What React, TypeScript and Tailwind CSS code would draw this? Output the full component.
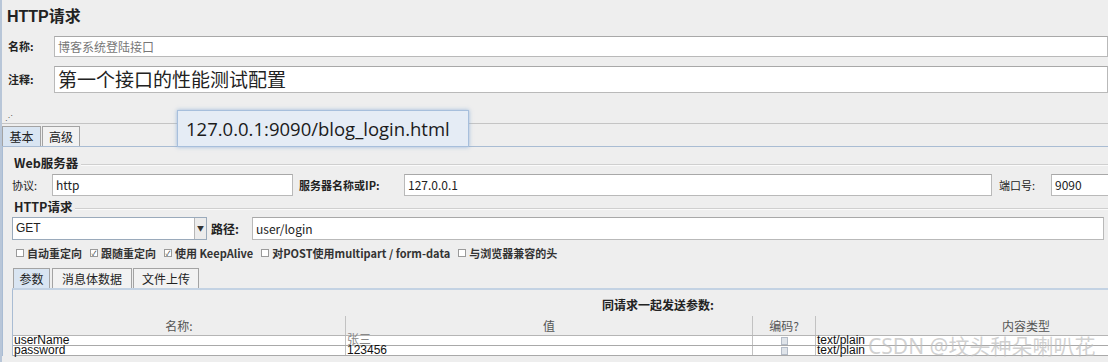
const cjk = { fontFamily: '"Noto Sans CJK SC", "Liberation Sans", sans-serif' };

function TextField({ value, className = '', big = false }: { value: string; className?: string; big?: boolean }) {
  return (
    <div
      className={`flex shrink-0 items-center border border-[#b9b9b9] border-t-[#a8a8a8] bg-white px-[3px] ${
        big ? 'text-[19px] text-[#222]' : 'text-[12px] text-[#222]'
      } ${className}`}
    >
      <span className="whitespace-nowrap">{value}</span>
    </div>
  );
}

function Check({ checked, label }: { checked: boolean; label: string }) {
  return (
    <div className="flex items-center gap-[3px] whitespace-nowrap">
      <span className="flex h-[8px] w-[8px] items-center justify-center border border-[#9a9a9a] bg-white text-[7px] leading-none text-[#333]">
        {checked ? '✓' : ''}
      </span>
      <span className="text-[11px] font-bold text-[#333]">{label}</span>
    </div>
  );
}

function GroupTitle({ title }: { title: string }) {
  return (
    <div className="flex h-[14px] items-center gap-[3px] pl-[2px]">
      <span className="whitespace-nowrap text-[12.5px] font-bold text-[#222]">{title}</span>
      <div className="mt-[3px] h-[2px] flex-1 border-t border-b border-t-[#cfcfcf] border-b-[#fafafa]" />
    </div>
  );
}

const params = [
  { name: 'userName', value: '张三', type: 'text/plain' },
  { name: 'password', value: '123456', type: 'text/plain' },
];

export default function App() {
  return (
    <div
      className="relative h-[362px] w-[1108px] overflow-hidden border-l-2 border-l-[#b8c6d8] bg-[#eeeeee] text-[#222]"
      style={cjk}
    >
      {/* header */}
      <div className="flex h-[34px] items-center pl-[5px] text-[16px] font-bold" style={{ fontFamily: '"Liberation Sans", "Noto Sans CJK SC", sans-serif' }}>
        HTTP请求
      </div>
      <div className="mt-[2px] flex h-[21px] items-center">
        <span className="w-[52px] shrink-0 pl-[6px] text-[11px] font-bold">名称:</span>
        <TextField value="博客系统登陆接口" className="h-[21px] flex-1 text-[#777]" />
      </div>
      <div className="mt-[9px] flex h-[27px] items-center">
        <span className="w-[52px] shrink-0 pl-[6px] text-[11px] font-bold">注释:</span>
        <TextField value="第一个接口的性能测试配置" big className="h-[27px] flex-1" />
      </div>
      <div className="flex h-[30px] items-end pb-[2px] pl-[3px] text-[8px] leading-none text-[#555]">⋰</div>
      <div className="h-px bg-[#c4c4c4]" />

      {/* top tabs */}
      <div className="flex h-[22px] items-end">
        <div className="flex h-[20px] w-[39px] items-center justify-center border border-b-0 border-[#a3a3a3] bg-[#d9e5f2] text-[12px]">基本</div>
        <div className="ml-px flex h-[20px] w-[38px] items-center justify-center border border-b-0 border-[#a3a3a3] bg-[#f2f2f2] text-[12px]">高级</div>
      </div>

      <div className="border-t border-l border-[#a9bcd3] pl-[9px] pt-[9px]">
        <GroupTitle title="Web服务器" />
        <div className="mt-[4px] flex h-[22px] items-center">
          <span className="w-[40px] shrink-0 text-[11px]">协议:</span>
          <TextField value="http" className="h-[22px] w-[241px]" />
          <span className="ml-[6px] w-[105px] shrink-0 text-[11px] font-bold">服务器名称或IP:</span>
          <TextField value="127.0.0.1" className="h-[22px] w-[588px]" />
          <span className="ml-[7px] w-[52px] shrink-0 text-[11px]">端口号:</span>
          <TextField value="9090" className="h-[22px] w-[90px]" />
        </div>

        <div className="mt-[4px]">
          <GroupTitle title="HTTP请求" />
        </div>
        <div className="mt-[3px] flex h-[23px] items-center">
          <div className="flex h-[23px] w-[195px] border border-[#9aaabb] bg-white">
            <span className="flex-1 pl-[3px] text-[12px] leading-[21px]" style={{ fontFamily: '"Liberation Sans", sans-serif' }}>GET</span>
            <span className="flex w-[12px] items-center justify-center border-l border-[#b7b7b7] bg-[#ececec] text-[7px] text-[#333]">▼</span>
          </div>
          <span className="ml-[4px] w-[41px] text-[12px] font-bold">路径:</span>
          <TextField value="user/login" className="h-[23px] w-[852px]" />
        </div>

        <div className="mt-[6px] flex h-[14px] items-center gap-[8px] pl-[4px]">
          <Check checked={false} label="自动重定向" />
          <Check checked label="跟随重定向" />
          <Check checked label="使用 KeepAlive" />
          <Check checked={false} label="对POST使用multipart / form-data" />
          <Check checked={false} label="与浏览器兼容的头" />
        </div>

        {/* sub tabs */}
        <div className="mt-[7px] flex h-[21px] items-end pl-[1px]">
          <div className="flex h-[20px] w-[37px] items-center justify-center border border-b-0 border-[#a3a3a3] bg-[#d9e5f2] text-[12px]">参数</div>
          <div className="ml-[2px] flex h-[20px] w-[80px] items-center justify-center border border-b-0 border-[#a3a3a3] bg-[#f2f2f2] text-[12px]">消息体数据</div>
          <div className="ml-px flex h-[20px] w-[66px] items-center justify-center border border-b-0 border-[#a3a3a3] bg-[#f2f2f2] text-[12px]">文件上传</div>
        </div>

        <div className="border-t-2 border-l border-t-[#c3d2e3] border-l-[#a9bcd3]">
          <div className="flex h-[24px] items-end pl-[589px] text-[12px] font-bold">同请求一起发送参数:</div>
          <div className="mt-[2px] grid grid-cols-[333px_407px_63px_420px] border-b border-[#b5b5b5] text-[12px] text-[#555]">
            <div className="flex h-[19px] items-center justify-center border-r border-[#c2c2c2]">名称:</div>
            <div className="flex h-[19px] items-center justify-center border-r border-[#c2c2c2]">值</div>
            <div className="flex h-[19px] items-center justify-center border-r border-[#c2c2c2]">编码?</div>
            <div className="flex h-[19px] items-center justify-center">内容类型</div>
          </div>
          {params.map((p) => (
            <div
              key={p.name}
              className="grid h-[10px] grid-cols-[333px_407px_63px_420px] border-b border-[#a9a9a9] bg-white text-[12px] leading-[9px] text-[#111]"
              style={{ fontFamily: '"Liberation Sans", "Noto Sans CJK SC", sans-serif' }}
            >
              <div className="overflow-visible border-r border-[#c2c2c2] pl-px">{p.name}</div>
              <div className={`border-r border-[#c2c2c2] pl-px ${p.value === '张三' ? 'text-[#888]' : ''}`}>{p.value}</div>
              <div className="flex items-center justify-center border-r border-[#c2c2c2]">
                <span className="h-[8px] w-[7px] border border-[#b4bcc8] bg-[#dfe4ea]" />
              </div>
              <div className="pl-px">{p.type}</div>
            </div>
          ))}
        </div>
      </div>

      {/* tooltip */}
      <div
        className="absolute left-[175px] top-[110px] flex h-[37px] w-[292px] items-center border border-[#a7bfdc] bg-[#e5ecf5] pl-[8px] text-[18.5px] text-[#1b1b1b] shadow-[0_0_4px_rgba(120,160,210,0.7)]"
        style={{ fontFamily: '"Open Sans", "Noto Sans", sans-serif' }}
      >
        127.0.0.1:9090/blog_login.html
      </div>

      {/* watermark */}
      <div className="absolute left-[866px] top-[331px] whitespace-nowrap text-[21px] text-[#bdbdbd]/70" style={{ fontFamily: '"Noto Sans", "Noto Sans CJK SC", sans-serif' }}>
        CSDN @坟头种朵喇叭花
      </div>
    </div>
  );
}
